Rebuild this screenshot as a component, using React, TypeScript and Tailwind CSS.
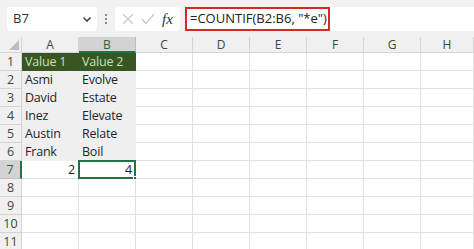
import React from "react";

const cols = ["A", "B", "C", "D", "E", "F", "G", "H"];
const rows = [1, 2, 3, 4, 5, 6, 7, 8, 9, 10, 11];

const data: Record<string, string> = {
  A1: "Value 1",
  B1: "Value 2",
  A2: "Asmi",
  B2: "Evolve",
  A3: "David",
  B3: "Estate",
  A4: "Inez",
  B4: "Elevate",
  A5: "Austin",
  B5: "Relate",
  A6: "Frank",
  B6: "Boil",
  A7: "2",
  B7: "4",
};

const Cell = ({ col, row }: { col: string; row: number }) => {
  const id = `${col}${row}`;
  const value = data[id];
  const inData = (col === "A" || col === "B") && row <= 6;
  const isHead = inData && row === 1;
  const isNum = row === 7 && (col === "A" || col === "B");
  const selected = id === "B7";

  let cls = "relative h-[18px] px-[3px] text-[12.5px] tracking-[-0.2px] leading-[18px] whitespace-nowrap ";
  if (isHead) cls += "bg-[#375623] text-[#c9e0b8] border-r border-b border-[#375623]";
  else if (inData) cls += "bg-[#efefef] text-[#262626] border-r border-b border-[#efefef]";
  else cls += "bg-white text-[#262626] border-r border-b border-[#e1e1e1]";
  if (isNum) cls += " text-right";

  return (
    <div className={cls}>
      {value}
      {selected && (
        <>
          <div className="pointer-events-none absolute -left-px -top-px -right-px -bottom-px border-2 border-[#217346]" />
          <div className="absolute -bottom-[3px] -right-[3px] h-[5px] w-[5px] border border-white bg-[#217346]" />
        </>
      )}
    </div>
  );
};

export default function App() {
  return (
    <div
      className="h-[249px] w-[474px] overflow-hidden bg-white"
      style={{ fontFamily: '"Open Sans", "Noto Sans", sans-serif' }}
    >
      {/* formula bar */}
      <div className="flex h-[37px] items-start bg-[#f2f1f1] pl-[7px] pt-[7px]">
        <div className="flex h-[24px] w-[90px] items-center justify-between rounded-[4px] bg-white pl-[6px] pr-[5px] text-[13px] text-[#333]">
          <span>B7</span>
          <svg width="10" height="7" viewBox="0 0 10 7">
            <path d="M1.5 1.5 L5 5 L8.5 1.5" fill="none" stroke="#444" strokeWidth="1.6" />
          </svg>
        </div>
        <div className="flex h-[24px] w-[18px] flex-col items-center justify-center gap-[2px]">
          <span className="h-[2px] w-[2px] rounded-full bg-[#666]" />
          <span className="h-[2px] w-[2px] rounded-full bg-[#666]" />
          <span className="h-[2px] w-[2px] rounded-full bg-[#666]" />
        </div>
        <div className="flex h-[24px] w-[65px] items-center rounded-[4px] bg-white pl-[6px]">
          <svg width="12" height="12" viewBox="0 0 12 12" className="ml-[1px]">
            <path d="M1 1 L11 11 M11 1 L1 11" stroke="#c8c8c8" strokeWidth="1.2" />
          </svg>
          <svg width="14" height="12" viewBox="0 0 14 12" className="ml-[7px]">
            <path d="M1 6 L5 10.5 L13 1" fill="none" stroke="#c8c8c8" strokeWidth="1.2" />
          </svg>
          <span
            className="ml-[7px] text-[15px] italic text-[#333]"
            style={{ fontFamily: '"Liberation Serif", serif' }}
          >
            fx
          </span>
        </div>
        <div className="ml-[5px] flex h-[24px] flex-1 items-center bg-white">
          <div className="flex h-[24px] w-[145px] items-center border-2 border-[#d8262b] pl-[3px] text-[13px] text-[#222]">
            =COUNTIF(B2:B6, "*e")
          </div>
        </div>
      </div>

      {/* grid */}
      <div className="grid grid-cols-[22px_repeat(7,57px)_1fr]">
        <div className="relative h-[16px] border-r border-b border-[#d4d4d4] bg-[#f0f0f0]">
          <svg width="10" height="10" viewBox="0 0 10 10" className="absolute bottom-[2px] right-[2px]">
            <path d="M10 0 L10 10 L0 10 Z" fill="#bdbdbd" />
          </svg>
        </div>
        {cols.map((c) =>
          c === "B" ? (
            <div
              key={c}
              className="h-[16px] border-r border-b-2 border-r-[#bdbdbd] border-b-[#217346] bg-[#d3d3d3] text-center text-[12px] leading-[15px] text-[#1d6b3c]"
            >
              {c}
            </div>
          ) : (
            <div
              key={c}
              className="h-[16px] border-r border-b border-[#d4d4d4] bg-[#f0f0f0] text-center text-[12px] leading-[15px] text-[#444]"
            >
              {c}
            </div>
          )
        )}
        {rows.map((r) => (
          <React.Fragment key={r}>
            {r === 7 ? (
              <div className="h-[18px] border-r-2 border-b border-r-[#217346] border-b-[#bdbdbd] bg-[#d3d3d3] text-center text-[12.5px] leading-[18px] text-[#1d6b3c]">
                {r}
              </div>
            ) : (
              <div className="h-[18px] border-r border-b border-[#d4d4d4] bg-[#f0f0f0] text-center text-[12.5px] leading-[18px] text-[#444]">
                {r}
              </div>
            )}
            {cols.map((c) => (
              <Cell key={c} col={c} row={r} />
            ))}
          </React.Fragment>
        ))}
      </div>
    </div>
  );
}
